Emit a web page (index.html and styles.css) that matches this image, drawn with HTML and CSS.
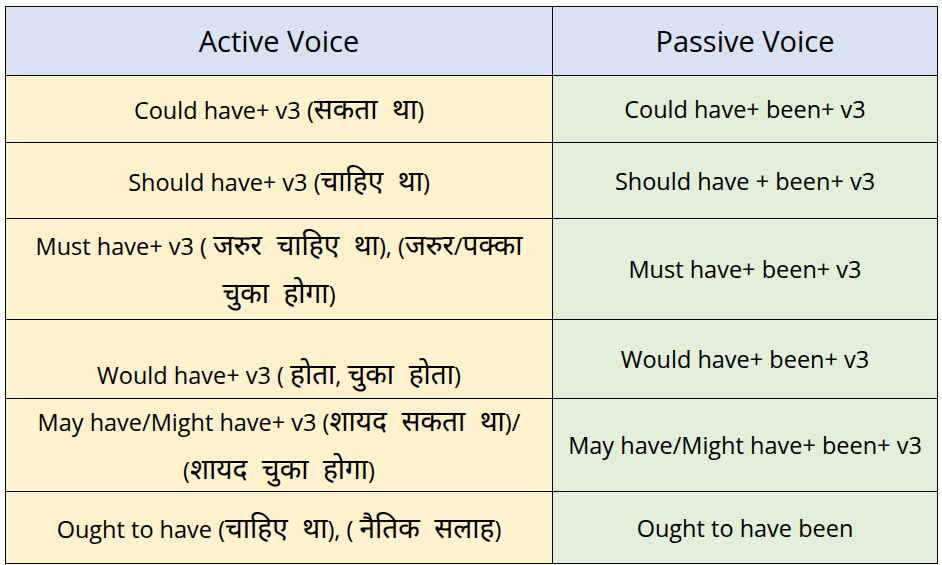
FILE: index.html
```html
<!DOCTYPE html>
<html lang="hi">
<head>
<meta charset="utf-8">
<title>Active Voice / Passive Voice</title>
<link rel="stylesheet" href="styles.css">
</head>
<body>
<div class="table">
  <div class="cell head">Active Voice</div>
  <div class="cell head">Passive Voice</div>

  <div class="cell act"><span>Could have+ v3 (<span class="hi">सकता&nbsp; था</span>)</span></div>
  <div class="cell pas">Could have+ been+ v3</div>

  <div class="cell act"><span>Should have+ v3 (<span class="hi">चाहिए&nbsp; था</span>)</span></div>
  <div class="cell pas">Should have + been+ v3</div>

  <div class="cell act"><span>Must have+ v3 ( <span class="hi">जरुर&nbsp; चाहिए&nbsp; था</span>), (<span class="hi">जरुर</span>/<span class="hi">पक्का</span><br><span class="hi">चुका&nbsp; होगा</span>)</span></div>
  <div class="cell pas">Must have+ been+ v3</div>

  <div class="cell act low"><span>Would have+ v3 ( <span class="hi">होता</span>, <span class="hi">चुका&nbsp; होता</span>)</span></div>
  <div class="cell pas">Would have+ been+ v3</div>

  <div class="cell act"><span>May have/Might have+ v3 (<span class="hi">शायद&nbsp; सकता&nbsp; था</span>)/<br>(<span class="hi">शायद&nbsp; चुका&nbsp; होगा</span>)</span></div>
  <div class="cell pas">May have/Might have+ been+ v3</div>

  <div class="cell act"><span>Ought to have (<span class="hi">चाहिए&nbsp; था</span>), ( <span class="hi">नैतिक&nbsp; सलाह</span>)</span></div>
  <div class="cell pas">Ought to have been</div>
</div>
</body>
</html>
```

FILE: styles.css
```css
html, body {
  margin: 0;
  padding: 0;
  background: #ffffff;
}

body {
  padding: 6px 0 0 5px;
  font-family: "Open Sans", "Noto Sans Devanagari", "Lohit Devanagari", "Mangal", "Noto Sans", sans-serif;
  color: #000000;
}

.table {
  display: grid;
  grid-template-columns: 547px 385px;
  grid-template-rows: 69px 67px 76px 101px 79px 93px 72px;
  width: 933px;
  box-sizing: border-box;
  border-top: 1px solid #000;
  border-left: 1px solid #000;
}

.cell {
  box-sizing: border-box;
  border-right: 1px solid #000;
  border-bottom: 1px solid #000;
  display: flex;
  align-items: center;
  justify-content: center;
  text-align: center;
  font-size: 23.5px;
  line-height: 46px;
  white-space: nowrap;
}

.hi {
  font-size: 28px;
}

.head {
  background: #d9e2f3;
  font-size: 29px;
}

.act {
  background: #fff2cc;
}

.pas {
  background: #e2efd9;
}

.low {
  align-items: flex-end;
  padding-bottom: 0;
}
```
